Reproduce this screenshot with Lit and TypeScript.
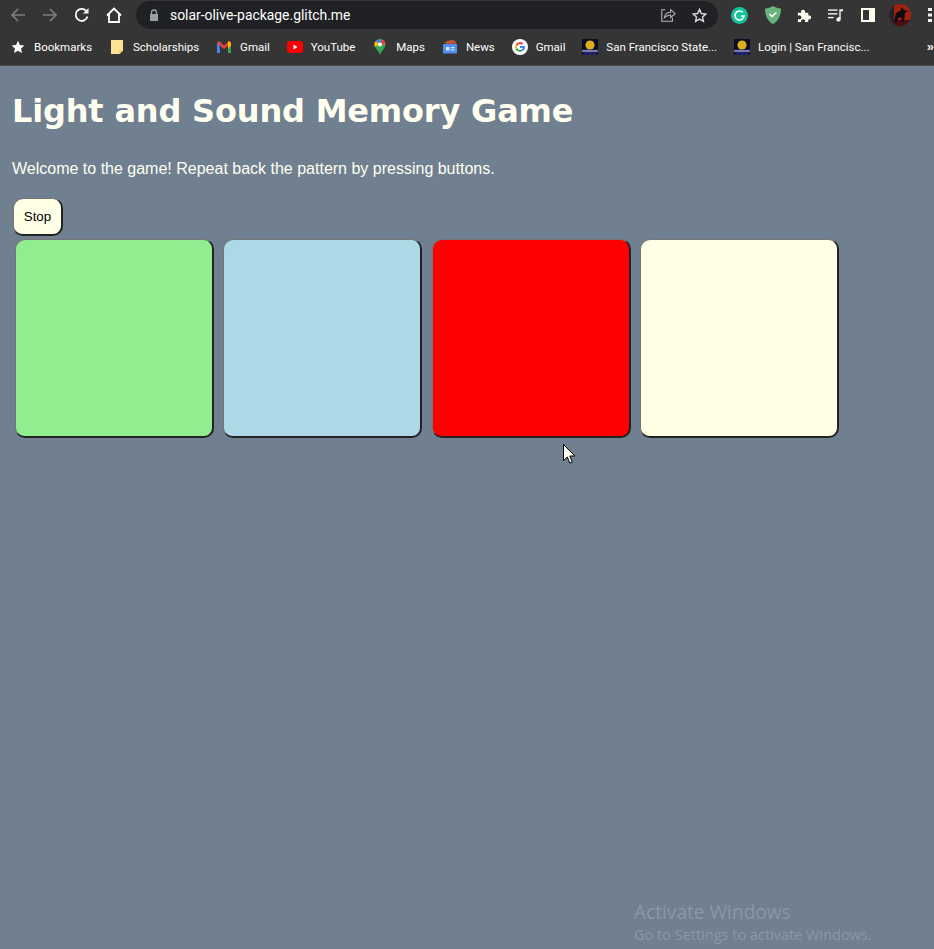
import { LitElement, html, css } from "lit";
import { customElement } from "lit/decorators.js";

const sfsu = html`<svg class="fav" viewBox="0 0 16 16"><rect width="16" height="16" fill="#0c0c20"/><rect x="1" y="10" width="14" height="6" fill="#1f1f66"/><rect y="11.500" width="16" height="1" fill="#d8d8e8"/><circle cx="8" cy="6" r="4.600" fill="#dcae1d"/></svg>`;

const bookmarks = [
  { label: "Bookmarks", icon: html`<svg class="fav small" viewBox="0 0 16 16"><path d="M8 .8l2.200 4.800 5.200.6-3.900 3.500 1.100 5.200L8 12.200l-4.600 2.700 1.100-5.200L.6 6.200l5.200-.6z" fill="#fff"/></svg>` },
  { label: "Scholarships", icon: html`<svg class="fav" viewBox="0 0 16 16"><path d="M2 1h12v10.500L10.500 15H2z" fill="#fde293"/><path d="M10.500 15v-3.500H14z" fill="#f2c94c"/></svg>` },
  { label: "Gmail", icon: html`<svg class="fav" viewBox="0 0 16 16"><path d="M1 14V4l2.500-1L4 14z" fill="#4285f4"/><path d="M12 14V3l2.500 1 .5 10z" fill="#34a853"/><path d="M1 4l2-2 5 4.500L13 2l2 2-7 6z" fill="#ea4335"/><path d="M13 2l2 2v3l-3 2.500V3z" fill="#fbbc04"/></svg>` },
  { label: "YouTube", icon: html`<svg class="fav" viewBox="0 0 16 16"><rect y="2" width="16" height="12" rx="3" fill="#f00"/><path d="M6.500 5.500l4 2.500-4 2.500z" fill="#fff"/></svg>` },
  { label: "Maps", icon: html`<svg class="fav" viewBox="0 0 16 16"><path d="M8 0a5.500 5.500 0 0 1 5.500 5.500C13.500 9.500 9 12 8 16 7 12 2.500 9.500 2.500 5.500A5.500 5.500 0 0 1 8 0z" fill="#34a853"/><path d="M4 2l4 3.500-5.200 2A5 5 0 0 1 4 2z" fill="#fbbc04"/><path d="M4 2a5.500 5.500 0 0 1 4-2l2 2-2 3.500z" fill="#4285f4"/><path d="M10 .5a5.500 5.500 0 0 1 3.500 5L8 5.500z" fill="#ea4335"/><circle cx="8" cy="5.500" r="2" fill="#fff"/></svg>` },
  { label: "News", icon: html`<svg class="fav" viewBox="0 0 16 16"><path d="M2 3.500l9-2.500 1 3H3z" fill="#34a853"/><path d="M5 1.500h8l2 4H4z" fill="#ea4335" opacity=".8"/><rect x="1" y="5" width="14" height="9.500" rx="1" fill="#4d90f0"/><rect x="4" y="8" width="3.500" height="3.500" fill="#d6e6fc"/><rect x="9" y="8" width="3.500" height="1.200" fill="#d6e6fc"/><rect x="9" y="10.300" width="3.500" height="1.200" fill="#d6e6fc"/></svg>` },
  { label: "Gmail", icon: html`<svg class="fav" viewBox="0 0 16 16"><circle cx="8" cy="8" r="8" fill="#fff"/><path d="M8 3a5 5 0 0 1 3.400 1.300L10 5.700A3 3 0 0 0 5.200 7.100L3.600 5.800A5 5 0 0 1 8 3z" fill="#ea4335"/><path d="M3.600 5.800l1.600 1.300a3 3 0 0 0 0 1.800l-1.600 1.300a5 5 0 0 1 0-4.400z" fill="#fbbc04"/><path d="M3.600 10.200l1.600-1.300a3 3 0 0 0 4.500 1.600l1.500 1.200A5 5 0 0 1 3.600 10.200z" fill="#34a853"/><path d="M13 7H8v2h2.800a2.400 2.400 0 0 1-1.100 1.500l1.500 1.200A5 5 0 0 0 13 7z" fill="#4285f4"/></svg>` },
  { label: "San Francisco State...", icon: sfsu },
  { label: "Login | San Francisc...", icon: sfsu },
];

@customElement("app-root")
export class AppRoot extends LitElement {
  static styles = css`
    :host { display: block; width: 934px; height: 949px; background: #708090; position: relative; overflow: hidden; }
    .toolbar { height: 30px; padding-bottom: 2px; background: #353535; display: flex; align-items: center; }
    .nav { width: 16px; height: 16px; flex: none; }
    .nav1 { margin-left: 10px; }
    .nav2 { margin-left: 16px; }
    .nav3 { margin-left: 16px; }
    .nav4 { margin-left: 16px; }
    .omni { margin-left: 14px; width: 582px; height: 28px; border-radius: 14px; background: #202124; display: flex; align-items: center; flex: none; }
    .lock { width: 12px; height: 12px; margin-left: 12px; flex: none; }
    .url { margin-left: 10px; font: 13.900px/16px Roboto, "Noto Sans", sans-serif; color: #fff; flex: 1; }
    .omni .share { width: 16px; height: 16px; margin-right: 16px; }
    .omni .star { width: 15px; height: 15px; margin-right: 11px; }
    .ext { flex: none; }
    .g { width: 17px; height: 17px; margin-left: 13px; }
    .shield { width: 16px; height: 18px; margin-left: 17px; }
    .puzzle { width: 15px; height: 15px; margin-left: 16px; }
    .media { width: 16px; height: 14px; margin-left: 16px; }
    .side { width: 14px; height: 14px; margin-left: 17px; }
    .avatar { width: 22px; height: 22px; margin-left: 14px; }
    .dots { width: 4px; height: 16px; margin-left: 17px; }
    .bar { height: 30px; padding: 0 0 3px 11px; background: #353535; border-bottom: 1px solid #4a4a4a; display: flex; align-items: center; position: relative; }
    .bm { display: flex; align-items: center; flex: none; margin-right: 16.900px; }
    .fav { width: 16px; height: 16px; flex: none; margin-right: 8px; display: block; }
    .fav.small { width: 14px; height: 14px; margin-right: 9px; }
    .bm span { font: 11.500px/16px Roboto, "Noto Sans", sans-serif; color: #fff; white-space: nowrap; }
    .more { position: absolute; right: 0; top: 7px; font: bold 13px/16px "Liberation Sans", sans-serif; color: #e8eaed; }
    main { padding: 0 12px; }
    h1 { margin: 0; padding-top: 26px; font: bold 32px/38px "DejaVu Sans", Verdana, sans-serif; color: #fffff0; white-space: nowrap; letter-spacing: -.18px; }
    p { margin: 0; padding-top: 30px; font: 16px/18px "Liberation Sans", Arial, sans-serif; color: #fffff0; }
    .stop { display: block; margin: 20px 0 0 1px; width: 50px; height: 38px; padding: 0; box-sizing: border-box; border-radius: 10px; background: #ffffe6; border-style: solid; border-width: 1px 2px 2px 1px; border-color: #767676 #222 #222 #767676; font: 13.330px "Liberation Sans", Arial, sans-serif; color: #000; }
    .pads { display: flex; gap: 9.330px; margin: 3px 0 0 3px; }
    .pad { display: block; width: 199px; height: 199px; flex: none; padding: 0; box-sizing: border-box; border-radius: 10px; border-style: solid; border-width: 1px 2px 2px 1px; border-color: #767676 #222 #222 #767676; }
    .green { background: #90ee90; }
    .blue { background: #add8e6; }
    .red { background: #f00; }
    .yellow { background: #ffffe6; }
    .cursor { position: absolute; left: 563px; top: 444px; width: 13px; height: 20px; }
    .wm { position: absolute; left: 634px; top: 901px; color: rgba(255,255,255,.2); font-family: "Open Sans", "Noto Sans", sans-serif; white-space: nowrap; }
    .wm div:first-child { font-size: 19.100px; line-height: 22px; }
    .wm div:last-child { font-size: 14.500px; line-height: 18px; margin-top: 3px; }
  `;

  render() {
    return html`
      <div class="toolbar">
        <svg class="nav nav1" viewBox="0 0 16 16" fill="none" stroke="#7d7e80" stroke-width="1.700"><path d="M15 8H2M8 2L2 8l6 6"/></svg>
        <svg class="nav nav2" viewBox="0 0 16 16" fill="none" stroke="#7d7e80" stroke-width="1.700"><path d="M1 8h13M8 2l6 6-6 6"/></svg>
        <svg class="nav nav3" viewBox="0 0 16 16" fill="none" stroke="#fffff8" stroke-width="1.800"><path d="M13.500 9.500A6 6 0 1 1 12 3.600"/><path d="M14.500 1v5.500H9" fill="#fffff8" stroke="none"/></svg>
        <svg class="nav nav4" viewBox="0 0 16 16" fill="none" stroke="#fffff8" stroke-width="1.800"><path d="M1 8.500L8 1.500l7 7M3 7v8h10V7"/></svg>
        <div class="omni">
          <svg class="lock" viewBox="0 0 12 12"><path d="M2 5h8v7H2z" fill="#9aa0a6"/><path d="M3.500 5V3.500a2.500 2.500 0 0 1 5 0V5" fill="none" stroke="#9aa0a6" stroke-width="1.300"/></svg>
          <div class="url">solar-olive-package.glitch.me</div>
          <svg class="share" viewBox="0 0 18 18" fill="none" stroke="#b4b6b8" stroke-width="1.200"><path d="M6 3H2v13h12v-4"/><path d="M5 12c.5-4 3-6 7-6V3l5 4.500-5 4.500V9c-3 0-5 1-7 3z"/></svg>
          <svg class="star" viewBox="0 0 16 16" fill="none" stroke="#dcdcdc" stroke-width="1.500"><path d="M8 1.500l2 4.400 4.800.5-3.600 3.200 1 4.700L8 11.900l-4.200 2.400 1-4.700L1.200 6.400 6 5.900z"/></svg>
        </div>
        <svg class="ext g" viewBox="0 0 17 17"><circle cx="8.500" cy="8.500" r="8.500" fill="#15c39a"/><path d="M11.800 5.400A4.500 4.500 0 1 0 13 9h-3" fill="none" stroke="#fff" stroke-width="1.700"/></svg>
        <svg class="ext shield" viewBox="0 0 16 18"><path d="M0 2.500C3 2.500 5.500 1.500 8 0c2.500 1.500 5 2.500 8 2.500C16 10 13 15.500 8 18 3 15.500 0 10 0 2.500z" fill="#68b27c"/><path d="M4.500 8l2.500 2.500 4.500-4" fill="none" stroke="#fff" stroke-width="1.500"/></svg>
        <svg class="ext puzzle" viewBox="0 0 16 16"><path d="M1 5h3.500a2.200 2.200 0 1 1 4 0H12v3a2.200 2.200 0 1 1 0 4v3H8.500a2.200 2.200 0 1 0-4 0H1v-3.500a2.200 2.200 0 1 0 0-3z" fill="#fffff0"/></svg>
        <svg class="ext media" viewBox="0 0 17 14" fill="#f3f3ea"><rect y="1" width="10" height="1.500"/><rect y="5" width="10" height="1.500"/><rect y="9" width="6" height="1.500"/><path d="M12 1h4v2h-2.500v8.500a2.300 2.300 0 1 1-1.500-2z"/></svg>
        <svg class="ext side" viewBox="0 0 14 14"><path d="M0 0h14v14H0z" fill="#fffff0"/><rect x="2" y="2" width="6" height="10" fill="#353535"/></svg>
        <svg class="ext avatar" viewBox="0 0 22 22"><defs><clipPath id="av"><circle cx="11" cy="11" r="11"/></clipPath></defs><g clip-path="url(#av)"><rect width="22" height="22" fill="#a3200f"/><rect y="16" width="22" height="6" fill="#4a0f10"/><rect width="5" height="22" fill="#22222c"/><path d="M5 18l2-9 4-2 2-4 2 3 4 1-3 2-1 9h-2l-1-5-3 1-1 4z" fill="#0d0d10"/></g></svg>
        <svg class="ext dots" viewBox="0 0 4 16" fill="#f0f0e8"><rect y="1" width="4" height="3"/><rect y="6.500" width="4" height="3"/><rect y="12" width="4" height="3"/></svg>
      </div>
      <div class="bar">
        ${bookmarks.map(b => html`<div class="bm">${b.icon}<span>${b.label}</span></div>`)}
        <div class="more">»</div>
      </div>
      <main>
        <h1>Light and Sound Memory Game</h1>
        <p>Welcome to the game! Repeat back the pattern by pressing buttons.</p>
        <button class="stop">Stop</button>
        <div class="pads">
          <button class="pad green"></button>
          <button class="pad blue"></button>
          <button class="pad red"></button>
          <button class="pad yellow"></button>
        </div>
      </main>
      <svg class="cursor" viewBox="0 0 13 20"><path d="M.5.500v16l3.800-3.500 2.500 6 2.500-1-2.500-6H12z" fill="#fffff0" stroke="#000"/></svg>
      <div class="wm"><div>Activate Windows</div><div>Go to Settings to activate Windows.</div></div>
    `;
  }
}
